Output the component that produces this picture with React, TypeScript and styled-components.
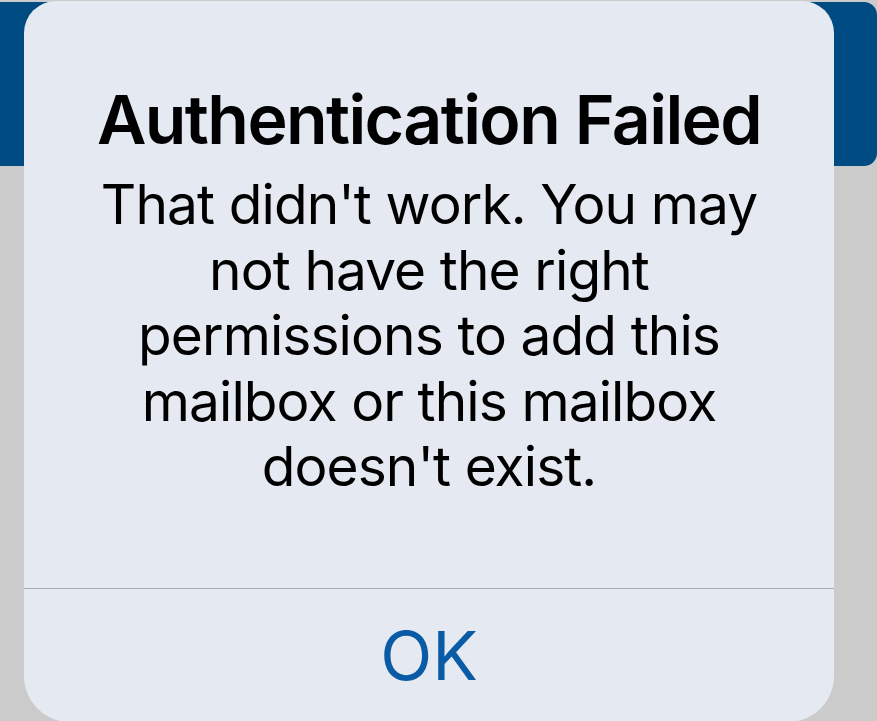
import React from "react";
import styled, { createGlobalStyle } from "styled-components";

const Global = createGlobalStyle`
  html, body {
    margin: 0;
    padding: 0;
    background: #cbcbcb;
  }
  body {
    font-family: Inter, "Noto Sans", "Liberation Sans", sans-serif;
    -webkit-font-smoothing: antialiased;
  }
`;

const Screen = styled.div`
  position: relative;
  width: 877px;
  height: 721px;
  overflow: hidden;
  background: #cbcbcb;
  padding-top: 2px;
  box-sizing: border-box;
`;

const HeaderBar = styled.div`
  height: 164px;
  background: #004b81;
  border-radius: 0 13px 13px 0;
`;

const Dialog = styled.div`
  position: absolute;
  left: 24px;
  top: 1px;
  width: 810px;
  height: 721px;
  background: #e5e9f1;
  border-radius: 32px 32px 46px 46px;
  display: flex;
  flex-direction: column;
  overflow: hidden;
`;

const Content = styled.div`
  padding: 78px 40px 88px;
  display: flex;
  flex-direction: column;
  align-items: center;
  gap: 13px;
  text-align: center;
`;

const Title = styled.h1`
  margin: 0;
  font-size: 68px;
  line-height: 80px;
  font-weight: 600;
  letter-spacing: -1.6px;
  color: #000;
`;

const Message = styled.p`
  margin: 0;
  font-size: 55px;
  line-height: 65.5px;
  font-weight: 400;
  letter-spacing: -0.9px;
  color: #000;
`;

const Separator = styled.div`
  height: 1px;
  background: #a9aeb8;
`;

const Action = styled.button`
  flex: 1;
  border: 0;
  background: transparent;
  font-family: inherit;
  font-size: 68px;
  line-height: 132px;
  font-weight: 400;
  color: #0a5ba6;
  padding: 0;
  margin: 0;
  display: flex;
  justify-content: center;
  align-items: flex-start;
`;

export default function App() {
  return (
    <>
      <Global />
      <Screen>
        <HeaderBar />
        <Dialog>
          <Content>
            <Title>Authentication Failed</Title>
            <Message>
              That didn't work. You may
              <br />
              not have the right
              <br />
              permissions to add this
              <br />
              mailbox or this mailbox
              <br />
              doesn't exist.
            </Message>
          </Content>
          <Separator />
          <Action>OK</Action>
        </Dialog>
      </Screen>
    </>
  );
}
